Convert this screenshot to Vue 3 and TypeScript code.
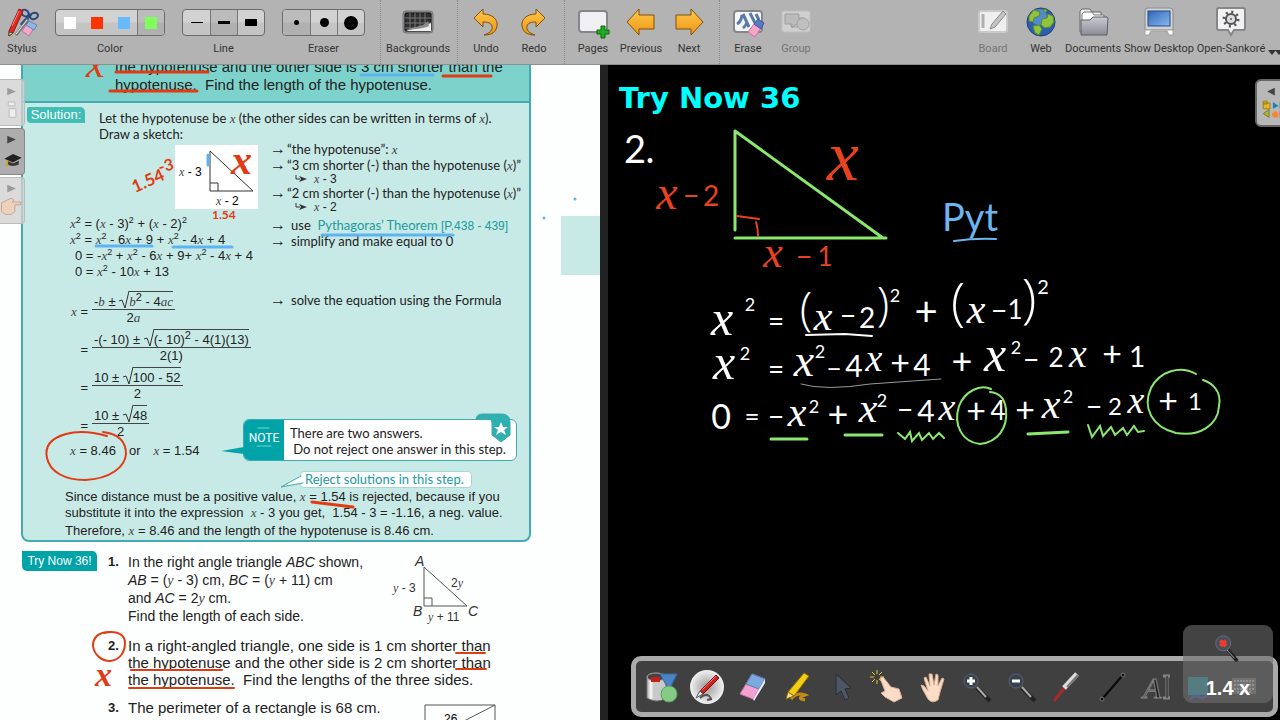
<script setup lang="ts">
import { ref } from 'vue'

interface Swatch { name: string; value: string }
interface Glyph { t: string; x: number; y: number; s: number; k?: 'v' | 'b' }

const swatches: Swatch[] = [
  { name: 'White', value: '#ffffff' },
  { name: 'Red', value: '#ff3300' },
  { name: 'Blue', value: '#66bbff' },
  { name: 'Green', value: '#80ff5c' },
]
const color = ref('Green')
const line = ref('Medium')
const eraser = ref('Small')
const tool = ref('Stylus')

const lines = ['Thin', 'Medium', 'Thick']
const erasers = ['Small', 'Medium', 'Large']
const tools = [
  'Fill', 'Stylus', 'Eraser', 'Highlighter', 'Select', 'Interact', 'Hand',
  'Zoom in', 'Zoom out', 'Laser pointer', 'Line', 'Text', 'Capture', 'Keyboard',
]

/* Handwritten working: centre x, baseline y, size; k 'v' is a variable, 'b' a bracket */
const white: Glyph[] = [
  { t: '2', x: 635, y: 163, s: 38 }, { t: '.', x: 650, y: 163, s: 38 },
  { t: 'x', x: 722, y: 335, s: 50, k: 'v' }, { t: '2', x: 750, y: 311, s: 18 },
  { t: '=', x: 776, y: 331, s: 28 }, { t: '(', x: 806, y: 325, s: 46, k: 'b' },
  { t: 'x', x: 823, y: 330, s: 42, k: 'v' }, { t: '−', x: 848, y: 326, s: 28 },
  { t: '2', x: 867, y: 328, s: 28 }, { t: ')', x: 883, y: 320, s: 46, k: 'b' },
  { t: '2', x: 895, y: 302, s: 18 }, { t: '+', x: 926, y: 326, s: 40 },
  { t: '(', x: 958, y: 320, s: 52, k: 'b' }, { t: 'x', x: 976, y: 323, s: 42, k: 'v' },
  { t: '−', x: 999, y: 321, s: 28 }, { t: '1', x: 1015, y: 319, s: 26 },
  { t: ')', x: 1029, y: 317, s: 54, k: 'b' }, { t: '2', x: 1043, y: 294, s: 20 },

  { t: 'x', x: 724, y: 379, s: 50, k: 'v' }, { t: '2', x: 745, y: 360, s: 18 },
  { t: '=', x: 776, y: 379, s: 28 }, { t: 'x', x: 804, y: 376, s: 46, k: 'v' },
  { t: '2', x: 820, y: 358, s: 18 }, { t: '−', x: 834, y: 378, s: 26 },
  { t: '4', x: 854, y: 377, s: 30 }, { t: 'x', x: 874, y: 371, s: 38, k: 'v' },
  { t: '+', x: 900, y: 375, s: 34 }, { t: '4', x: 922, y: 376, s: 30 },
  { t: '+', x: 962, y: 374, s: 36 }, { t: 'x', x: 995, y: 371, s: 50, k: 'v' },
  { t: '2', x: 1016, y: 354, s: 18 }, { t: '−', x: 1031, y: 370, s: 28 },
  { t: '2', x: 1056, y: 367, s: 26 }, { t: 'x', x: 1078, y: 367, s: 40, k: 'v' },
  { t: '+', x: 1112, y: 366, s: 34 }, { t: '1', x: 1137, y: 367, s: 28 },

  { t: '0', x: 721, y: 429, s: 34 }, { t: '=', x: 752, y: 426, s: 26 },
  { t: '−', x: 776, y: 427, s: 28 }, { t: 'x', x: 797, y: 426, s: 42, k: 'v' },
  { t: '2', x: 814, y: 413, s: 18 }, { t: '+', x: 838, y: 427, s: 36 },
  { t: 'x', x: 868, y: 422, s: 42, k: 'v' }, { t: '2', x: 882, y: 407, s: 18 },
  { t: '−', x: 905, y: 420, s: 28 }, { t: '4', x: 926, y: 422, s: 30 },
  { t: 'x', x: 947, y: 420, s: 38, k: 'v' }, { t: '+', x: 976, y: 423, s: 34 },
  { t: '4', x: 998, y: 420, s: 26 }, { t: '+', x: 1025, y: 422, s: 34 },
  { t: 'x', x: 1051, y: 418, s: 42, k: 'v' }, { t: '2', x: 1068, y: 403, s: 18 },
  { t: '−', x: 1094, y: 417, s: 28 }, { t: '2', x: 1115, y: 415, s: 24 },
  { t: 'x', x: 1136, y: 413, s: 38, k: 'v' }, { t: '+', x: 1168, y: 413, s: 34 },
  { t: '1', x: 1195, y: 410, s: 24 },
]
const red: Glyph[] = [
  { t: 'x', x: 843, y: 180, s: 72, k: 'v' },
  { t: 'x', x: 667, y: 209, s: 48, k: 'v' }, { t: '−', x: 691, y: 206, s: 28 }, { t: '2', x: 711, y: 206, s: 28 },
  { t: 'x', x: 773, y: 267, s: 44, k: 'v' }, { t: '−', x: 804, y: 267, s: 28 }, { t: '1', x: 825, y: 266, s: 26 },
]
</script>

<template>
  <div class="app">
    <header class="bar">
      <button class="item first">
        <svg class="ico" viewBox="0 0 32 32">
          <path d="M15 19L25 8M22 24L21 11" stroke="#2b4a86" stroke-width="3" />
          <ellipse cx="19" cy="7" rx="4" ry="3" fill="none" stroke="#27457f" stroke-width="2" transform="rotate(35 19 7)" />
          <ellipse cx="28" cy="10" rx="4" ry="3" fill="none" stroke="#27457f" stroke-width="2" transform="rotate(-20 28 10)" />
          <path d="M22 13L10 29" stroke="#777" stroke-width="3" />
          <path d="M21 14L10 28" stroke="#eee" />
          <path d="M3 25L13 3l4 2L7 27l-4 3z" fill="#e02a22" stroke="#8d1512" />
          <path d="M6 20L13 5" stroke="#ff8a80" />
          <path d="M3 26v4l4-3z" fill="#efd9b8" stroke="#55442e" />
          <path d="M16 25l5-7 7 4-5 8z" fill="#f2a8cc" stroke="#b678a0" />
          <path d="M20 19l3-4 8 4-3 5z" fill="#8eb7e6" stroke="#6485b5" />
        </svg>
        <span>Stylus</span>
      </button>
      <div class="item">
        <div class="seg colors" role="group" aria-label="Color">
          <button v-for="s in swatches" :key="s.name" :aria-label="s.name" :class="{ on: color === s.name }" @click="color = s.name">
            <i class="sw" :style="{ background: s.value }"></i>
          </button>
        </div>
        <span>Color</span>
      </div>
      <div class="item">
        <div class="seg" role="group" aria-label="Line">
          <button v-for="(l, i) in lines" :key="l" :aria-label="l" :class="{ on: line === l }" @click="line = l">
            <i :class="['ln', 'ln' + i]"></i>
          </button>
        </div>
        <span>Line</span>
      </div>
      <div class="item">
        <div class="seg" role="group" aria-label="Eraser">
          <button v-for="(e, i) in erasers" :key="e" :aria-label="e" :class="{ on: eraser === e }" @click="eraser = e">
            <i :class="['dot', 'dot' + i]"></i>
          </button>
        </div>
        <span>Eraser</span>
      </div>
      <div class="group wide">
        <button class="item">
          <svg class="ico" viewBox="0 0 32 32">
            <rect x="1" y="5" width="30" height="22" rx="3" fill="#8c8e93" stroke="#74767b" />
            <rect x="3" y="7" width="26" height="18" rx="1" fill="#2f2f30" stroke="#111" />
            <path d="M3 12h26M3 17h26M3 22h26M8 7v18M13 7v18M18 7v18M23 7v18" stroke="#777" />
            <path d="M4 25c8-3 16-4 25-8v8z" fill="#eee" />
            <path d="M4 24c9-4 17-3 22-9l1 5c-6 3-15 3-23 4z" fill="#8b8b8b" />
          </svg>
          <span>Backgrounds</span>
        </button>
      </div>
      <div class="group">
        <button class="item">
          <svg class="ico" viewBox="0 0 32 32">
            <path d="M4 12L13 3v5c10 0 15 6 14 12-1 6-5 9-13 9 6-2 9-5 8-9-1-3-4-4-9-4v5z" fill="url(#gold)" stroke="#80500c" stroke-linejoin="round" />
          </svg>
          <span>Undo</span>
        </button>
        <button class="item">
          <svg class="ico" viewBox="0 0 32 32">
            <path d="M27 12L18 3v5C8 8 3 14 4 20c1 6 5 9 13 9-6-2-9-5-8-9 1-3 4-4 9-4v5z" fill="url(#gold)" stroke="#80500c" stroke-linejoin="round" />
          </svg>
          <span>Redo</span>
        </button>
      </div>
      <div class="group">
        <button class="item">
          <svg class="ico" viewBox="0 0 32 32">
            <rect x="2" y="5" width="28" height="21" rx="3" fill="#f0f0f2" stroke="#85868b" stroke-width="2" />
            <path d="M24 20h4v4h4v4h-4v4h-4v-4h-4v-4h4z" fill="#1fae22" stroke="#08660b" />
          </svg>
          <span>Pages</span>
        </button>
        <button class="item">
          <svg class="ico" viewBox="0 0 32 32">
            <path d="M2 16L14 3v6h15v14H14v6z" fill="url(#gold)" stroke="#80500c" stroke-linejoin="round" />
          </svg>
          <span>Previous</span>
        </button>
        <button class="item">
          <svg class="ico" viewBox="0 0 32 32">
            <path d="M30 16L18 3v6H3v14h15v6z" fill="url(#gold)" stroke="#80500c" stroke-linejoin="round" />
          </svg>
          <span>Next</span>
        </button>
      </div>
      <div class="group">
        <button class="item">
          <svg class="ico" viewBox="0 0 32 32">
            <rect x="2" y="5" width="28" height="21" rx="3" fill="#f4f6f8" stroke="#85868b" stroke-width="2" />
            <path d="M5 18q4-2 5-9M17 21L11 8M23 17L18 7M27 14L24 8M11 22q3-2 4-6" fill="none" stroke="#5b7ba6" stroke-width="3" />
            <path d="M16 26l6-8 7 4-6 9z" fill="#f5a6c9" stroke="#cd6e9d" />
            <path d="M22 18l4-5 6 4-3 6z" fill="#5b78c4" stroke="#3f599c" />
          </svg>
          <span>Erase</span>
        </button>
        <button class="item" disabled>
          <svg class="ico" viewBox="0 0 32 32">
            <rect x="2" y="5" width="28" height="21" rx="2" fill="#d0d0d0" stroke="#bebebe" />
            <path d="M11 12h13v9H11z" fill="#c1c1c1" stroke="#a3a3a3" />
            <path d="M5 8h14v10h-3l-4 4v-4H5z" fill="#bbb" stroke="#9d9d9d" />
            <circle cx="23" cy="18" r="6" fill="#bfbfbf" stroke="#a3a3a3" />
          </svg>
          <span>Group</span>
        </button>
      </div>
      <nav class="right">
        <button class="item" disabled>
          <svg class="ico" viewBox="0 0 32 32">
            <rect x="2" y="5" width="28" height="21" rx="2" fill="#efefef" stroke="#c9c9c9" stroke-width="2" />
            <path d="M6 8v14" stroke="#b0b0b0" stroke-width="3" />
            <path d="M13 23l2-5L26 5l3 3-11 13z" fill="#c4c4c4" stroke="#888" />
          </svg>
          <span>Board</span>
        </button>
        <button class="item">
          <svg class="ico" viewBox="0 0 32 32">
            <circle cx="16" cy="16" r="14" fill="#2b5fb0" stroke="#1d3e78" />
            <circle cx="14" cy="11" r="8" fill="#6ea5e2" opacity="0.6" />
            <path d="M4 10l5-6 6 2-1 4-5 2-1 4-4-1zM17 13l5-1 1-4 5 2 1 6-4 5-5 1-4-3zM8 20l6-1 3 4-3 6-4-2zM18 3l4 1-2 3z" fill="#8fc43c" stroke="#5d8c24" />
          </svg>
          <span>Web</span>
        </button>
        <button class="item">
          <svg class="ico" viewBox="0 0 32 32">
            <path d="M3 26V5l2-2h8l2 3h9v20z" fill="#eee" stroke="#666" />
            <path d="M5 27V8l2-2h8l2 3h10v18z" fill="#fff" stroke="#777" />
            <path d="M4 29V14h9l3-3h14l1 1-1 17z" fill="url(#folder)" stroke="#5d5e68" />
          </svg>
          <span>Documents</span>
        </button>
        <button class="item">
          <svg class="ico" viewBox="0 0 32 32">
            <path d="M2 5q0-3 3-3h22q3 0 3 3v19H2z" fill="#d3d3d5" stroke="#8a8a8c" />
            <rect x="5" y="5" width="22" height="15" fill="url(#screen)" stroke="#244a82" />
            <path d="M2 24h28v5h-4l-2-4H8l-2 4H2z" fill="#fff" stroke="#a0a0a0" />
          </svg>
          <span>Show Desktop</span>
        </button>
        <button class="item">
          <svg class="ico" viewBox="0 0 32 32">
            <path d="M4 2h24q2 0 2 2v18q0 2-2 2h-9l-3 5-3-5H4q-2 0-2-2V4q0-2 2-2z" fill="#f2f2f2" stroke="#85858a" stroke-width="2" />
            <circle cx="16" cy="13" r="7" fill="none" stroke="#555" stroke-width="3" stroke-dasharray="2 3.5" />
            <circle cx="16" cy="13" r="5" fill="#ddd" stroke="#555" stroke-width="2" />
            <circle cx="16" cy="13" r="1" fill="#555" />
          </svg>
          <span>Open-Sankoré</span>
        </button>
        <button class="more" aria-label="More"><svg viewBox="0 0 12 6"><path d="M0 0h8L4 5zM7 0h8l-4 5z" fill="#333" /></svg></button>
      </nav>
    </header>

    <main class="work">
      <section class="doc">
        <div class="page">
          <article class="card">
            <p class="question">the hypotenuse and the other side is 3 cm shorter than the<br>hypotenuse.&nbsp; Find the length of the hypotenuse.</p>
            <div class="intro">
              <strong class="tag">Solution:</strong>
              <p>Let the hypotenuse be <em>x</em> (the other sides can be written in terms of <em>x</em>).<br>Draw a sketch:</p>
            </div>
            <div class="cols">
              <div class="left">
                <svg class="sketch" viewBox="0 0 83 64">
                  <path d="M35 6V46H78Z" fill="none" stroke="#333" />
                  <path d="M35 38h8v8" fill="none" stroke="#333" />
                  <text x="4" y="31"><tspan class="it">x</tspan> - 3</text>
                  <text x="41" y="60"><tspan class="it">x</tspan> - 2</text>
                </svg>
                <p><em>x</em><sup>2</sup> = (<em>x</em> - 3)<sup>2</sup> + (<em>x</em> - 2)<sup>2</sup></p>
                <p><em>x</em><sup>2</sup> = <em>x</em><sup>2</sup> - 6<em>x</em> + 9 + <em>x</em><sup>2</sup> - 4<em>x</em> + 4</p>
                <p class="ind">0 = -<em>x</em><sup>2</sup> + <em>x</em><sup>2</sup> - 6<em>x</em> + 9+ <em>x</em><sup>2</sup> - 4<em>x</em> + 4</p>
                <p class="ind">0 = <em>x</em><sup>2</sup> - 10<em>x</em> + 13</p>
                <div class="eqs">
                  <div class="eq"><span><em>x</em> =</span>
                    <div class="frac"><div><span>-<em>b</em> ± </span><svg class="rad" viewBox="0 0 10 18"><path d="M0 10l3-1 3 8 4-17" /></svg><b><em>b</em><sup>2</sup> - 4<em>ac</em></b></div><div>2<em>a</em></div></div>
                  </div>
                  <div class="eq"><span>=</span>
                    <div class="frac"><div><span>-(- 10) ± </span><svg class="rad" viewBox="0 0 10 18"><path d="M0 10l3-1 3 8 4-17" /></svg><b>(- 10)<sup>2</sup> - 4(1)(13)</b></div><div>2(1)</div></div>
                  </div>
                  <div class="eq"><span>=</span>
                    <div class="frac"><div><span>10 ± </span><svg class="rad" viewBox="0 0 10 18"><path d="M0 10l3-1 3 8 4-17" /></svg><b>100 - 52</b></div><div>2</div></div>
                  </div>
                  <div class="eq"><span>=</span>
                    <div class="frac"><div><span>10 ± </span><svg class="rad" viewBox="0 0 10 18"><path d="M0 10l3-1 3 8 4-17" /></svg><b>48</b></div><div>2</div></div>
                  </div>
                </div>
                <p class="ans"><span><em>x</em> = 8.46</span><span>or</span><span><em>x</em> = 1.54</span></p>
              </div>
              <div class="steps">
                <p><i>→</i>“the hypotenuse”: <em>x</em></p>
                <p><i>→</i>“3 cm shorter (-) than the hypotenuse (<em>x</em>)”</p>
                <p class="sub"><svg viewBox="0 0 12 8"><path d="M1 0v4h4" fill="none" stroke="#333" /><path d="M4 1l8 3-8 3 2-3z" fill="#333" /></svg><em>x</em> - 3</p>
                <p><i>→</i>“2 cm shorter (-) than the hypotenuse (<em>x</em>)”</p>
                <p class="sub"><svg viewBox="0 0 12 8"><path d="M1 0v4h4" fill="none" stroke="#333" /><path d="M4 1l8 3-8 3 2-3z" fill="#333" /></svg><em>x</em> - 2</p>
                <p class="use"><i>→</i>use&nbsp; <a href="#p438">Pythagoras’ Theorem <span>[P.438 - 439]</span></a></p>
                <p class="gap"><i>→</i>simplify and make equal to 0</p>
                <p class="solve"><i>→</i>solve the equation using the Formula</p>
                <aside class="note">
                  <strong>NOTE</strong>
                  <div>There are two answers.<br>&nbsp;Do not reject one answer in this step.</div>
                </aside>
                <div class="bubble">Reject solutions in this step.</div>
              </div>
            </div>
            <p class="end">Since distance must be a positive value, <em>x</em> = 1.54 is rejected, because if you<br>substitute it into the expression &nbsp;<em>x</em> - 3 you get, &nbsp;1.54 - 3 = -1.16, a neg. value.</p>
            <p class="end last">Therefore, <em>x</em> = 8.46 and the length of the hypotenuse is 8.46 cm.</p>
          </article>
          <div class="try">
            <strong class="tag2">Try Now 36!</strong>
            <div class="qs">
              <div class="q q1">
                <b>1.</b>
                <p>In the right angle triangle <u>ABC</u> shown,<br><u>AB</u> = (<em>y</em> - 3) cm, <u>BC</u> = (<em>y</em> + 11) cm<br>and <u>AC</u> = 2<em>y</em> cm.<br>Find the length of each side.</p>
                <svg class="tri" viewBox="0 0 90 72">
                  <path d="M34 14V53H77Z" fill="none" stroke="#555" />
                  <path d="M34 45h8v8" fill="none" stroke="#555" />
                  <text x="25" y="13" class="o">A</text><text x="23" y="63" class="o">B</text><text x="78" y="63" class="o">C</text>
                  <text x="3" y="39"><tspan class="it">y</tspan> - 3</text>
                  <text x="61" y="34">2<tspan class="it">y</tspan></text>
                  <text x="38" y="68"><tspan class="it">y</tspan> + 11</text>
                </svg>
              </div>
              <div class="q q2"><b>2.</b><p>In a right-angled triangle, one side is 1 cm shorter than<br>the hypotenuse and the other side is 2 cm shorter than<br>the hypotenuse.&nbsp; Find the lengths of the three sides.</p></div>
              <div class="q q3">
                <b>3.</b><p>The perimeter of a rectangle is 68 cm.</p>
                <svg class="rect" viewBox="0 0 84 30"><path d="M1 30V1H71V30M71 1L15 30" fill="none" stroke="#555" /><text x="20" y="19">26</text><text x="75" y="22" class="it">x</text></svg>
              </div>
            </div>
          </div>
        </div>
        <div class="patch"></div>
        <svg class="ink">
          <g transform="translate(0 -65)" fill="none" stroke-linecap="round">
            <g stroke="#3fa9b0">
              <path d="M221 451l23-4v7z" fill="#00a3a8" stroke="none" />
              <path d="M301 476l-20 11 22-4" fill="#fff" />
              <path d="M476 419q1-5 6-5h21q7 1 7 8v13l-9 7-9-7v-12q0-4-3-4z" fill="#2fb0b0" />
              <path d="M501 422l2 5h5l-4 3 2 5-5-3-5 3 2-5-4-3h5z" fill="#fff" stroke="none" />
              <path d="M258 428h11M257 446h14" stroke="#79d2d0" />
            </g>
            <g stroke="#e23b14" stroke-width="3">
              <path d="M116 72H208M110 91H197M443 76H491" />
              <path d="M312 502L353 507" />
              <path d="M107 436C90 431 76 431 66 434C48 439 45 449 47 458C50 472 65 480 85 480C110 479 125 467 126 454C126 442 119 434 103 432" stroke-width="2" />
              <path d="M112 632C98 631 93 638 93 646C94 655 102 661 110 661C120 660 125 652 125 643C125 635 118 630 104 633" stroke-width="2" />
              <path d="M456 653H485M456 669H486M131 670H222M129 688H234" stroke-width="2" />
            </g>
            <g stroke="#5cb5f2" stroke-width="3">
              <path d="M361 75H433M322 235H453M96 246H152M173 247H232" />
              <path d="M208 155V165" />
              <path d="M544 218h0M575 199h0" />
            </g>
            <g class="hand" fill="#e23b14">
              <text x="86" y="77" class="v" font-size="42">x</text>
              <text x="231" y="174" class="v bold" font-size="42">x</text>
              <text x="95" y="686" class="v bold" font-size="34">x</text>
              <text x="135" y="193" class="bold" font-size="17" transform="rotate(-24 135 193)">1.54</text>
              <text x="160" y="173" class="bold" font-size="16" transform="rotate(-15 160 173)">-3</text>
              <text x="212" y="219" class="bold" font-size="12">1.54</text>
            </g>
          </g>
        </svg>
        <div class="tabs">
          <button aria-label="Pages palette"><svg viewBox="0 0 26 48"><path d="M7 8l9 4-9 4z" fill="#9a9a9a" /><path d="M8 23h7v4H8zM9 30h7v9H9z" fill="#eee" stroke="#bbb" /></svg></button>
          <button class="dark" aria-label="Library"><svg viewBox="0 0 26 48"><path d="M7 7l9 4-9 4z" fill="#444" /><path d="M4 31l9-5 9 4-9 5z" fill="#222" /><path d="M7 33v4q6 3 12 0v-4l-6 3z" fill="#333" /><path d="M7 33v6" stroke="#d8a020" stroke-width="2" /></svg></button>
          <button aria-label="Interact"><svg viewBox="0 0 26 48"><path d="M7 7l9 4-9 4z" fill="#9a9a9a" /><path d="M1 26l4-2 6-3 3 2-2 2h9v3h-6v7l-4 3H5l-4-3z" fill="#ecd2bd" stroke="#c4a58c" /></svg></button>
        </div>
      </section>
      <div class="split"></div>
      <section class="board">
        <h1>Try Now 36</h1>
        <svg class="ink">
          <g transform="translate(-608 -65)" fill="none" stroke-linecap="round">
            <g stroke="#8be86e" stroke-width="3">
              <path d="M735 131V230M735 131L883 238M735 238H886" />
              <g stroke-width="2">
                <path d="M771 439H807M845 435H882M1028 434L1068 432" stroke-width="3" />
                <path d="M898 433l7 6 5-7 2 9 7-8 3 7 7-7 4 6 6-6 5 5" />
                <path d="M1088 425l4 12 8-11 3 10 8-9 4 8 8-7 4 7 7-9 4 6 6-1" />
                <path d="M991 389C980 384 965 391 959 406C953 425 962 442 980 444C998 442 1008 428 1006 409C1004 396 998 393 990 392" />
                <path d="M1196 374C1180 365 1160 371 1151 388C1142 408 1152 427 1176 433C1200 437 1218 425 1219 406C1222 391 1212 383 1203 380" />
              </g>
            </g>
            <g stroke="#e8431f" stroke-width="2"><path d="M737 216L759 219M756 222Q758 228 758 236" /></g>
            <path d="M954 241Q975 238 996 239" stroke="#6cb6f0" stroke-width="2" />
            <path d="M806 335L845 334L872 336" stroke="#fff" stroke-width="2" />
            <path d="M801 384Q825 391 870 384L941 379" stroke="#999" />
          </g>
          <g class="hand mid" transform="translate(-608 -65)">
            <g fill="#fff"><text v-for="(g, i) in white" :key="i" :x="g.x" :y="g.y" :font-size="g.s" :class="g.k">{{ g.t }}</text></g>
            <g fill="#e8431f"><text v-for="(g, i) in red" :key="i" :x="g.x" :y="g.y" :font-size="g.s" :class="g.k">{{ g.t }}</text></g>
            <g fill="#6cb6f0"><text x="970" y="231" font-size="38">Pyt</text></g>
          </g>
        </svg>
        <button class="rtab" aria-label="Open library"><svg viewBox="0 0 26 48"><path d="M18 7l-8 4 8 4z" fill="#444" /><path d="M6 23h7v6H6zM6 21h4v3H6z" fill="#e8b923" stroke="#a07b10" /><path d="M16 22v7l6-3z" fill="#1d7fb5" /><path d="M23 22h4v7h-4z" fill="#1d9f8a" /><path d="M12 30v8l-6-4z" fill="#b0b83a" stroke="#777d10" /><path d="M15 34l4-3 3 3-1 4h-5z" fill="#f08a2a" /><path d="M23 31h4v7h-4z" fill="#e83d94" /></svg></button>
        <div class="tools" role="toolbar" aria-label="Tools">
          <button v-for="t in tools" :key="t" :aria-label="t" :class="{ on: tool === t }" @click="tool = t">
            <svg viewBox="0 0 36 36">
              <template v-if="t === 'Fill'"><path d="M3 8h19v21q-9 6-19 0z" fill="#c9c9c9" stroke="#777" /><path d="M7 10v20" stroke="#f0f0f0" stroke-width="3" /><ellipse cx="12" cy="8" rx="9" ry="4" fill="#444" stroke="#aaa" /><path d="M7 8h9v5H7z" fill="#c4201c" /><path d="M16 5h17l-8 16z" fill="#4a84c4" stroke="#3468a2" /><circle cx="25" cy="25" r="8" fill="#85cb86" stroke="#5ba35d" /></template>
              <template v-else-if="t === 'Stylus'"><circle cx="18" cy="18" r="17" fill="url(#disc)" /><path d="M11 29q5-5 9-2t-2 4l5-1" fill="none" stroke="#555" stroke-width="2" /><path d="M10 27l2-6L27 6l3 3-15 15z" fill="#cf2020" stroke="#7d0d0d" /><path d="M13 21L27 7" stroke="#ff7b6e" /><path d="M7 29l4-7 3 3z" fill="#eee" stroke="#555" /></template>
              <template v-else-if="t === 'Eraser'"><path d="M6 25L18 5l13 5-12 20z" fill="#f3a1d0" stroke="#cb74a7" /><path d="M12 15l6-10 13 5-6 10z" fill="#7fa9dc" stroke="#4f7cb6" /><path d="M19 30l6-10 6-10v4L20 32z" fill="#e7ecf7" /></template>
              <template v-else-if="t === 'Highlighter'"><path d="M12 30q6-7 14-4-6 2-4 4 4 1 4 1" fill="none" stroke="#c78b13" stroke-width="3" /><path d="M9 23L25 4l5 3-15 20z" fill="#f4cc16" stroke="#8c6d04" /><path d="M7 30l2-7 6 4z" fill="#f5dd9b" stroke="#8c6d04" /></template>
              <template v-else-if="t === 'Select'"><path d="M12 5v21l5-4 4 9 4-2-4-9 6-1z" fill="#4e5666" stroke="#272c36" /></template>
              <template v-else-if="t === 'Interact'"><path d="M8 1v4M8 11v4M1 8h4M11 8h4M3 3l3 3M10 10l3 3M13 3l-3 3M3 13l3-3" stroke="#e5c32e" /><path d="M11 9l3-1 8 10 8 2 3 9-8 4-9-5-4-4 4-2z" fill="#fbdcc6" stroke="#d8ad91" /></template>
              <template v-else-if="t === 'Hand'"><path d="M14 30L9 21l-2-5 3 1 4 5-4-13 2-1 4 9-1-12h3l2 11 2-11 2 1v11l4-8 2 1-4 13-2 8q-6 4-10-1z" fill="#fbdcc6" stroke="#d8ad91" /></template>
              <template v-else-if="t === 'Zoom in' || t === 'Zoom out'"><path d="M18 19l13 13" stroke="#222" stroke-width="4" /><path d="M18 18l9 10" stroke="#aaa" stroke-width="2" /><circle cx="12" cy="12" r="7" fill="#39414e" stroke="#596375" /><path v-if="t === 'Zoom in'" d="M12 8v8M8 12h8" stroke="#fff" stroke-width="3" /><path v-else d="M8 12h8" stroke="#fff" stroke-width="3" /></template>
              <template v-else-if="t === 'Laser pointer'"><path d="M5 32L16 18" stroke="#a52a2a" stroke-width="3" /><path d="M15 19L28 5" stroke="#ddd" stroke-width="5" /><path d="M18 18L29 6" stroke="#777" stroke-width="2" /></template>
              <template v-else-if="t === 'Line'"><path d="M9 29L28 7" stroke="#090909" stroke-width="2" /><circle cx="8" cy="30" r="2" fill="#111" stroke="#777" /><circle cx="29" cy="6" r="2" fill="#111" stroke="#777" /></template>
              <template v-else-if="t === 'Text'"><text x="4" y="29" class="ai">A</text><path d="M24 7h7M28 7v22M24 29h7" stroke="#858585" stroke-width="3" /><path d="M28 7v22" stroke="#111" /></template>
              <template v-else-if="t === 'Capture'"><path d="M4 8h20v18H4z" fill="#2f8e98" /><path d="M6 31q4-6 9-3t9-4" fill="none" stroke="#4452b0" stroke-width="3" /></template>
              <template v-else><path d="M3 9h24v16H3z" fill="#777" /><path d="M5 12h21M5 16h21M5 20h21M8 23h14" stroke="#bbb" stroke-dasharray="2 1" stroke-width="2" /></template>
            </svg>
          </button>
        </div>
        <div class="zoom">
          <svg viewBox="0 0 32 32"><path d="M18 18l10 12" stroke="#222" stroke-width="4" /><path d="M17 18l8 9" stroke="#aaa" /><circle cx="13" cy="11" r="8" fill="#48505f" stroke="#687080" /><path d="M10 8l6 6M16 8l-6 6" stroke="#ef3a2f" stroke-width="4" /></svg>
          <output>1.4 x</output>
        </div>
      </section>
    </main>
    <svg class="defs" aria-hidden="true">
      <defs>
        <linearGradient id="gold" x1="0" y1="0" x2="0" y2="1"><stop offset="0" stop-color="#ffc94d" /><stop offset="1" stop-color="#ee9411" /></linearGradient>
        <linearGradient id="folder" x1="0" y1="0" x2="0" y2="1"><stop offset="0" stop-color="#c9cad2" /><stop offset="1" stop-color="#8b8c96" /></linearGradient>
        <linearGradient id="screen" x1="0" y1="0" x2="1" y2="1"><stop offset="0" stop-color="#2f68b8" /><stop offset="1" stop-color="#8ab9f0" /></linearGradient>
        <radialGradient id="disc"><stop offset="0" stop-color="#999" /><stop offset="1" stop-color="#f2f2f2" /></radialGradient>
      </defs>
    </svg>
  </div>
</template>

<style>
body { margin: 0; background: #000; }
</style>

<style scoped>
.app { display: flex; flex-direction: column; height: 100vh; overflow: hidden; font-family: "Liberation Sans", Arial, sans-serif; }
button { font: inherit; color: inherit; border: 0; padding: 0; background: none; }
p, h1 { margin: 0; }
.defs { position: absolute; width: 0; height: 0; }

.bar { display: flex; flex: none; height: 64px; background: #b3b3b3; border-bottom: 1px solid #8f8f8f; font: 11px/14px Roboto, "DejaVu Sans", sans-serif; color: #333; }
.item { display: flex; flex-direction: column; align-items: center; width: 48px; padding-top: 6px; white-space: nowrap; }
.item > span { margin-top: 4px; }
.item:disabled { color: #757575; }
.ico { width: 32px; height: 32px; flex: none; overflow: visible; }
.bar > .item { width: auto; margin-right: 17px; }
.bar > .first { width: 44px; margin-right: 11px; }
.seg { display: flex; margin: 3px 0 2px; border: 1px solid #6b6b6b; border-radius: 4px; overflow: hidden; background: linear-gradient(#d2d2d2 48%, #c4c4c4 52%); }
.seg button { display: flex; align-items: center; justify-content: center; width: 27px; height: 25px; }
.seg button + button { border-left: 1px solid #777; }
.seg.colors button + button { border-left-color: transparent; }
.seg.colors button.on { border-left-color: #777; }
.seg .on { background: linear-gradient(#bcbcbc 48%, #b0b0b0 52%); }
.sw { width: 12px; height: 12px; }
.ln { width: 12px; background: #000; }
.ln0 { height: 1px; } .ln1 { height: 3px; } .ln2 { height: 7px; }
.dot { border-radius: 50%; background: #000; }
.dot0 { width: 5px; height: 5px; } .dot1 { width: 9px; height: 9px; } .dot2 { width: 14px; height: 14px; }
.group { display: flex; border-left: 1px dotted #8a8a8a; padding: 0 6px 0 4px; }
.bar > .wide { margin-left: -2px; }
.wide .item { width: 66px; }
.right { display: flex; margin-left: auto; }
.right .item:nth-child(3) { width: 56px; }
.right .item:nth-child(4) { width: 76px; }
.right .item:nth-child(5) { width: 68px; }
.more { align-self: flex-end; width: 12px; height: 14px; overflow: hidden; display: flex; margin-left: 3px; }
.more svg { width: 12px; height: 6px; }

.work { flex: 1; min-height: 0; display: grid; grid-template-columns: 46.875% 8px 1fr; }
.doc { position: relative; overflow: hidden; background: #fdfefe; color: #222; font-size: 13px; line-height: 16px; white-space: nowrap; }
.split { background: #222; }
.ink { position: absolute; inset: 0; width: 100%; height: 100%; pointer-events: none; }
.page { width: 85%; margin-left: 21px; }
em, .it { font-family: "Liberation Serif", serif; font-style: italic; line-height: 0; color: #444; fill: #444; }
sup { font-size: 9px; line-height: 0; vertical-align: 5px; }
.card { border: 2px solid #45aab0; border-top: 0; border-radius: 0 0 8px 8px; background: #c8eae6; }
.question { box-sizing: border-box; height: 38px; padding-left: 92px; background: #7dd3cc; border-bottom: 2px solid #45aab0; font-size: 15px; line-height: 18px; display: flex; align-items: flex-end; padding-bottom: 7px; }
.intro { display: flex; align-items: flex-start; padding: 4px 0 0 4px; font-family: Lato, sans-serif; }
.intro p { margin: 3px 0 0 14px; }
.tag { width: 58px; text-align: center; background: #40bdb5; border-radius: 2px 5px 0 4px; color: #fff; font: 13px/16px "Liberation Sans", sans-serif; }
.cols { display: grid; grid-template-columns: 200px 1fr; padding-left: 47px; }
.left p { height: 16px; }
.sketch { display: block; width: 83px; height: 64px; margin: 3px 0 7px 105px; background: #fff; font-size: 12px; }
.ind { padding-left: 5px; }
.eqs { margin-top: 8px; }
.eq { display: flex; align-items: center; height: 38px; }
.eq > span { width: 18px; text-align: right; margin: 9px 4px 0 0; flex: none; }
.frac { text-align: center; line-height: 15px; }
.frac > div:first-child { height: 20px; display: flex; align-items: flex-end; border-bottom: 1px solid #444; padding: 0 2px; white-space: pre; }
.frac b { font-weight: 400; border-top: 1px solid #444; padding-top: 2px; }
.frac sup { font-size: 11px; }
.rad { width: 10px; height: 18px; fill: none; stroke: #333; }
.ans { display: flex; gap: 13px; margin-top: 3px; }
.steps { margin-top: -1px; font-family: Lato, sans-serif; }
.steps p { height: 16px; }
.steps i { font: 16px/16px "Liberation Serif", serif; display: inline-block; width: 17px; height: 16px; vertical-align: top; }
.steps .sub { height: 12px; line-height: 12px; padding-left: 25px; font-family: "Liberation Sans", sans-serif; font-size: 12px; }
.sub svg { width: 12px; height: 8px; margin-right: 7px; }
.steps .use { margin-top: 4px; }
.use i, .gap i, .solve i { width: 21px; }
.steps a { color: #1b9aa0; text-decoration: none; }
.steps a span { font: 12px/16px "Liberation Sans", sans-serif; }
.steps .solve { margin-top: 43px; }
.note { display: flex; width: 274px; height: 42px; margin: 111px 0 0 -27px; box-sizing: border-box; border: 1px solid #3fa9b0; border-radius: 6px; background: #fff; overflow: hidden; }
.note strong { width: 40px; background: #00a3a8; color: #fff; font: 12px/36px Roboto, sans-serif; text-align: center; }
.note div { padding: 5px 0 0 6px; }
.bubble { margin: 10px 0 0 30px; box-sizing: border-box; width: 172px; height: 17px; line-height: 15px; border: 1px solid #a5d8d6; border-radius: 4px; background: #fff; color: #1b9aa0; padding-left: 4px; }
.end { padding-left: 42px; margin-top: 1px; }
.end.last { margin-top: 2px; padding-bottom: 1px; }
.try { display: flex; align-items: flex-start; margin: 9px 0 0 1px; font-size: 14px; }
.tag2 { width: 75px; background: #00a3a8; color: #fff; font: 12px/20px "Liberation Sans", sans-serif; text-align: center; border-radius: 0 5px 0 5px; }
.qs { margin: 2px 0 0 11px; }
.q { display: flex; line-height: 17px; }
.q b { width: 20px; font-size: 13px; }
.q1 { line-height: 18px; }
.q1 u { text-decoration: none; font-style: italic; }
.q2 { margin-top: 12px; font-size: 15px; }
.q3 { margin-top: 11px; font-size: 15px; }
.tri { width: 90px; height: 72px; margin-left: 27px; font-size: 12px; fill: #333; }
.tri .o { font-style: italic; font-size: 14px; }
.rect { width: 84px; height: 30px; margin: 5px 0 0 43px; font-size: 12px; }
.patch { position: absolute; right: 0; top: 151px; width: 39px; height: 59px; background: #c8eae6; }
.hand { font-family: Lato, "Open Sans", sans-serif; }
.mid { text-anchor: middle; }
.v { font-family: "Liberation Serif", serif; font-style: italic; }
.b { font-weight: 300; font-family: "Open Sans", sans-serif; }
.bold { font-weight: 700; }
.tabs { position: absolute; left: 0; top: 14px; display: flex; flex-direction: column; gap: 2px; }
.tabs button { display: block; width: 25px; height: 47px; background: #d2d2d2cc; border: 1px solid #bbb; border-left: 0; border-radius: 0 4px 4px 0; }
.tabs .dark { background: #adadad; border-color: #888; }
.tabs svg, .rtab svg { display: block; width: 26px; height: 46px; }

.board { position: relative; overflow: hidden; background: #000; display: flex; flex-direction: column; }
.board h1 { padding: 16px 0 0 11px; font: bold 29px/34px "DejaVu Sans", sans-serif; color: #0ff; }
.rtab { position: absolute; right: -2px; top: 14px; width: 27px; height: 48px; background: #b8b8b8; border: 2px solid #666; border-radius: 6px 0 0 6px; }
.tools { display: flex; justify-content: space-between; align-items: center; margin: auto 2px 3px 23px; box-sizing: border-box; height: 61px; padding: 0 8px; border: 5px solid #aaa; border-radius: 10px; background: #404040; }
.tools button, .tools svg { display: block; width: 36px; height: 36px; }
.ai { font: italic 30px "Liberation Serif", serif; fill: #181818; stroke: #858585; stroke-width: 1px; }
.zoom { position: absolute; right: 7px; bottom: 17px; width: 90px; height: 78px; border-radius: 9px; background: #70707099; text-align: center; color: #fff; }
.zoom svg { display: block; width: 30px; height: 30px; margin: 8px auto 0 28px; }
.zoom output { display: block; margin-top: 13px; font: bold 20px/24px "Liberation Sans", sans-serif; }
</style>
